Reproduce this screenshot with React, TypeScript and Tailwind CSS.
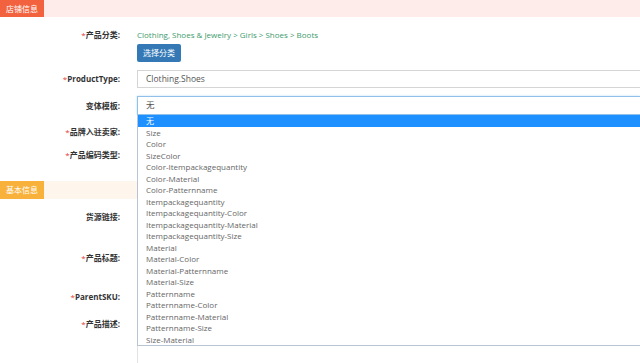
import React from "react";

const font = { fontFamily: '"Open Sans", "Noto Sans CJK SC", sans-serif' };

const options = [
  "无",
  "Size",
  "Color",
  "SizeColor",
  "Color-Itempackagequantity",
  "Color-Material",
  "Color-Patternname",
  "Itempackagequantity",
  "Itempackagequantity-Color",
  "Itempackagequantity-Material",
  "Itempackagequantity-Size",
  "Material",
  "Material-Color",
  "Material-Patternname",
  "Material-Size",
  "Patternname",
  "Patternname-Color",
  "Patternname-Material",
  "Patternname-Size",
  "Size-Material",
];

function Label({ text, req }: { text: string; req?: boolean }) {
  return (
    <div className="w-[121px] shrink-0 text-right pr-[1px] font-bold text-[#333] text-[8px]">
      {req && <span className="text-[#e4393c] font-normal">*</span>}
      {text}
    </div>
  );
}

export default function App() {
  return (
    <div className="w-[640px] h-[363px] overflow-hidden bg-white relative" style={font}>
      <div className="h-[17px] flex bg-[#fdecea]">
        <div className="w-[44px] h-full flex items-center justify-center text-white text-[8px] bg-[#f2623e]">店铺信息</div>
      </div>

      {/* 产品分类 */}
      <div className="flex gap-[16px] pt-[12px]">
        <div className="h-[12px] flex items-center">
          <Label text="产品分类:" req />
        </div>
        <div className="flex flex-col">
          <div className="h-[12px] flex items-center text-[8px] text-[#3d9b6c] whitespace-nowrap">
            Clothing, Shoes &amp; Jewelry &gt; Girls &gt; Shoes &gt; Boots
          </div>
          <div className="mt-[3px] w-[44px] h-[18px] rounded-[2px] bg-[#3479b6] text-white text-[8px] flex items-center justify-center">
            选择分类
          </div>
        </div>
      </div>

      {/* ProductType */}
      <div className="flex gap-[16px] mt-[8px] items-center h-[18px]">
        <Label text="ProductType:" req />
        <div className="flex-1 h-[18px] border border-[#d5d5d5] border-r-0 flex items-center pl-[8px] text-[8.5px] text-[#555]">
          Clothing.Shoes
        </div>
      </div>

      {/* 变体模板 */}
      <div className="flex gap-[16px] mt-[8px] items-center h-[19px]">
        <Label text="变体模板:" />
        <div className="flex-1 relative h-[19px]">
          <div className="h-full border border-[#8fc1ea] border-r-0 shadow-[0_0_2px_#bcdcf5] flex items-center pl-[8px] text-[8.5px] text-[#555]">
            无
          </div>
          <div className="absolute left-0 top-full w-[520px] z-10 bg-white border-l border-b border-[#b8c4d4]">
            {options.map((o, i) => (
              <div
                key={o}
                className={`h-[11.5px] leading-[11.5px] pl-[8px] text-[8px] whitespace-nowrap ${
                  i === 0 ? "bg-[#1e90ff] text-white" : "text-[#666]"
                }`}
              >
                {o}
              </div>
            ))}
          </div>
        </div>
      </div>

      <div className="flex gap-[16px] mt-[6px] h-[22px] items-center">
        <Label text="品牌入驻卖家:" req />
      </div>
      <div className="flex gap-[16px] h-[24px] items-center">
        <Label text="产品编码类型:" req />
      </div>

      <div className="mt-[14px]">
        <div className="h-[18px] flex bg-[#fef6ec]">
          <div className="w-[44px] h-full flex items-center justify-center text-white text-[8px] bg-[#f8b23c]">基本信息</div>
        </div>
      </div>

      <div className="flex gap-[16px] h-[36px] items-center">
        <Label text="货源链接:" />
      </div>
      <div className="flex gap-[16px] h-[46px] items-center">
        <Label text="产品标题:" req />
      </div>
      <div className="flex gap-[16px] h-[32px] items-center">
        <Label text="ParentSKU:" req />
      </div>
      <div className="flex gap-[16px]">
        <div className="h-[22px] flex items-center">
          <Label text="产品描述:" req />
        </div>
        <div className="flex-1 h-[60px] border-l border-[#e2e2e2]" />
      </div>
    </div>
  );
}
